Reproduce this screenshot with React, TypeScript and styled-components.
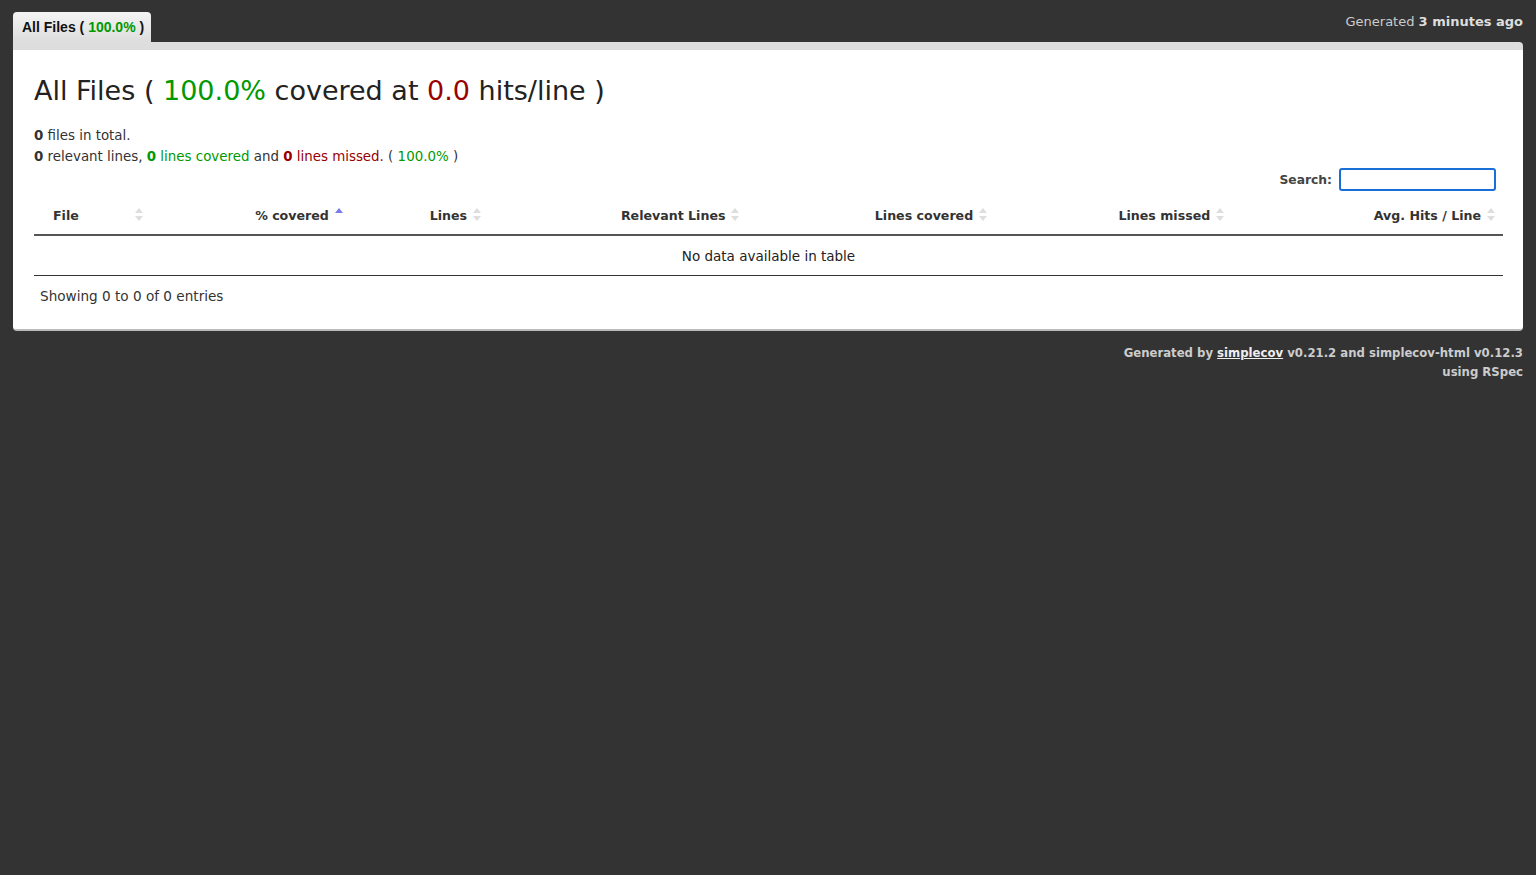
import React from 'react';
import styled, { createGlobalStyle } from 'styled-components';

const GlobalStyle = createGlobalStyle`
  html, body {
    margin: 0;
    padding: 0;
    background: #333333;
  }
  body {
    font-family: "DejaVu Sans", "Liberation Sans", sans-serif;
    color: #333;
  }
`;

const Page = styled.div`
  padding: 12px 13px;
`;

const TopBar = styled.div`
  display: flex;
  justify-content: space-between;
  align-items: flex-start;
`;

const Tab = styled.div`
  height: 30px;
  line-height: 31px;
  padding: 0 7px 0 9px;
  border-radius: 4px 4px 0 0;
  background: linear-gradient(#f4f4f4, #dddddd);
  font-family: "Liberation Sans", Arial, sans-serif;
  font-weight: bold;
  font-size: 14px;
  color: #111;
`;

const Timestamp = styled.div`
  padding-top: 2px;
  font-size: 13px;
  color: #ccc;

  b {
    color: #ddd;
  }
`;

const Green = styled.span`
  color: #090;
`;

const Red = styled.span`
  color: #900;
`;

const Panel = styled.div`
  background: #fff;
  border-top: 8px solid #dddddd;
  border-bottom: 2px solid #bbb;
  border-radius: 0 4px 4px 4px;
  padding: 25px 20px 25px 21px;
`;

const Title = styled.h2`
  margin: 0 0 19px;
  font-size: 27px;
  font-weight: normal;
  color: #222;
`;

const Summary = styled.div`
  font-size: 13.4px;
  line-height: 21px;
  color: #333;

  b {
    color: inherit;
  }
`;

const SearchRow = styled.div`
  display: flex;
  justify-content: flex-end;
  align-items: center;
  gap: 7px;
  margin-top: 1px;
  padding-right: 7px;
  font-size: 12.3px;
  font-weight: bold;
  color: #444;
`;

const SearchInput = styled.input`
  box-sizing: border-box;
  width: 157px;
  height: 23px;
  border: 2px solid #1a6fd6;
  border-radius: 3px;
  outline: none;
  padding: 0 3px;
  font-size: 13px;
`;

const Table = styled.table`
  width: 100%;
  border-collapse: collapse;
  margin-top: 2px;
  font-size: 13.5px;
`;

const Th = styled.th<{ $w: number }>`
  width: ${p => p.$w}px;
  padding: 15px 8px 11px 0;
  border-bottom: 2px solid #555;
  font-size: 12.6px;
  font-weight: bold;
  color: #333;
`;

const HeadCell = styled.div<{ $left?: boolean }>`
  display: flex;
  align-items: center;
  justify-content: ${p => (p.$left ? 'space-between' : 'flex-end')};
  padding-left: ${p => (p.$left ? '19px' : '0')};
  gap: 6px;
  white-space: nowrap;
`;

const SortIcon = styled.svg`
  flex: none;
  margin-top: -2px;
`;

const EmptyCell = styled.td`
  text-align: center;
  padding: 12px 0 11px;
  border-bottom: 1px solid #333;
  color: #222;
`;

const Info = styled.div`
  padding: 12px 0 0 6px;
  font-size: 13.6px;
  color: #333;
`;

const Footer = styled.div`
  margin-top: 13px;
  text-align: right;
  font-size: 11.7px;
  font-weight: bold;
  line-height: 19px;
  color: #ccc;

  a {
    color: #eee;
    text-decoration: underline;
  }
`;

const Sort = ({ active }: { active?: boolean }) => (
  <SortIcon width="8" height="15" viewBox="0 0 8 15">
    {active ? (
      <path d="M0 6 L4 1 L8 6 Z" fill="#7b7be8" />
    ) : (
      <>
        <path d="M0 6 L4 1 L8 6 Z" fill="#dedede" />
        <path d="M0 9 L4 14 L8 9 Z" fill="#dedede" />
      </>
    )}
  </SortIcon>
);

const columns = [
  { label: 'File', w: 113, left: true },
  { label: '% covered', w: 199, active: true },
  { label: 'Lines', w: 136 },
  { label: 'Relevant Lines', w: 260 },
  { label: 'Lines covered', w: 249 },
  { label: 'Lines missed', w: 238 },
  { label: 'Avg. Hits / Line', w: 273 },
];

const App: React.FC = () => {
  return (
    <Page>
      <GlobalStyle />
      <TopBar>
        <Tab>
          All Files ( <Green>100.0%</Green> )
        </Tab>
        <Timestamp>
          Generated <b>3 minutes ago</b>
        </Timestamp>
      </TopBar>
      <Panel>
        <Title>
          All Files ( <Green>100.0%</Green> covered at <Red>0.0</Red> hits/line )
        </Title>
        <Summary>
          <div>
            <b>0</b> files in total.
          </div>
          <div>
            <b>0</b> relevant lines, <Green><b>0</b> lines covered</Green> and{' '}
            <Red><b>0</b> lines missed.</Red> ( <Green>100.0%</Green> )
          </div>
        </Summary>
        <SearchRow>
          <label htmlFor="search">Search:</label>
          <SearchInput id="search" type="search" autoFocus />
        </SearchRow>
        <Table>
          <thead>
            <tr>
              {columns.map(c => (
                <Th key={c.label} $w={c.w}>
                  <HeadCell $left={c.left}>
                    <span>{c.label}</span>
                    <Sort active={c.active} />
                  </HeadCell>
                </Th>
              ))}
            </tr>
          </thead>
          <tbody>
            <tr>
              <EmptyCell colSpan={7}>No data available in table</EmptyCell>
            </tr>
          </tbody>
        </Table>
        <Info>Showing 0 to 0 of 0 entries</Info>
      </Panel>
      <Footer>
        Generated by <a href="#">simplecov</a> v0.21.2 and simplecov-html v0.12.3
        <br />
        using RSpec
      </Footer>
    </Page>
  );
};

export default App;
